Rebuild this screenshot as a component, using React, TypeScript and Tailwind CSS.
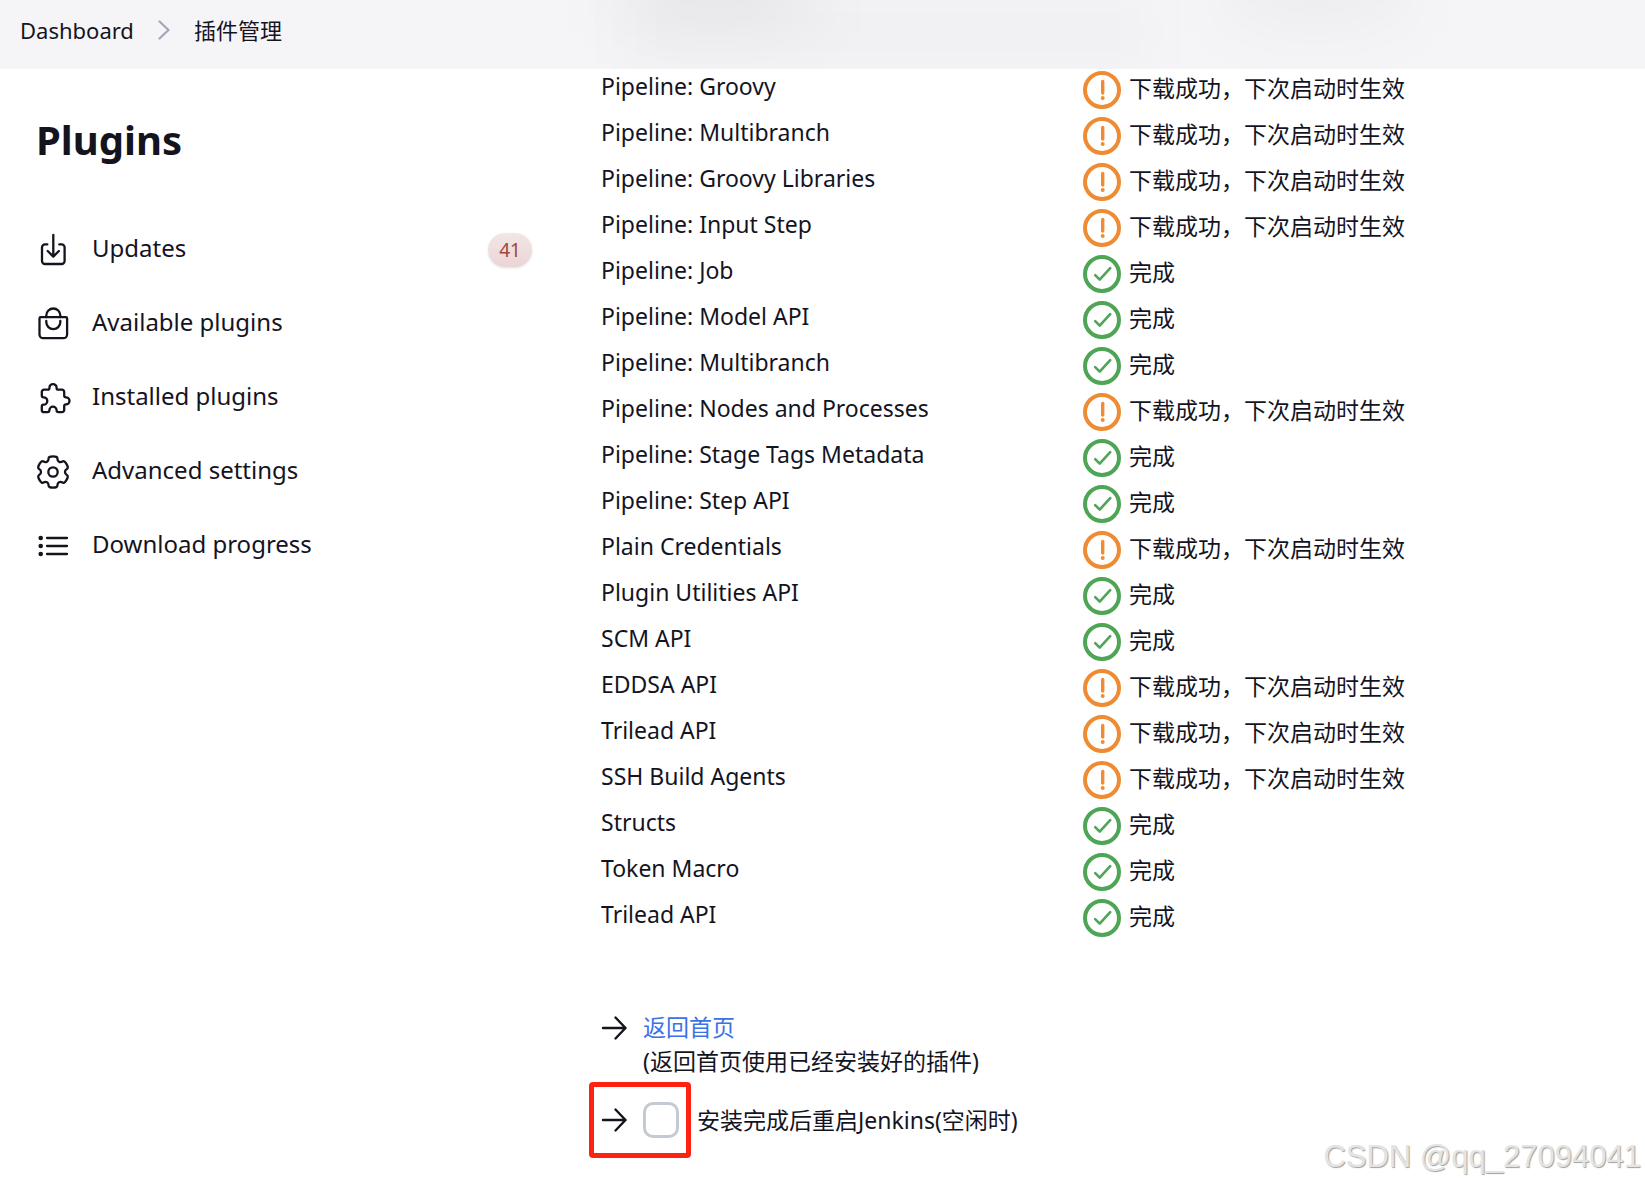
type Status = "done" | "pending"

const plugins: { name: string; status: Status }[] = [
  { name: "Pipeline: Groovy", status: "pending" },
  { name: "Pipeline: Multibranch", status: "pending" },
  { name: "Pipeline: Groovy Libraries", status: "pending" },
  { name: "Pipeline: Input Step", status: "pending" },
  { name: "Pipeline: Job", status: "done" },
  { name: "Pipeline: Model API", status: "done" },
  { name: "Pipeline: Multibranch", status: "done" },
  { name: "Pipeline: Nodes and Processes", status: "pending" },
  { name: "Pipeline: Stage Tags Metadata", status: "done" },
  { name: "Pipeline: Step API", status: "done" },
  { name: "Plain Credentials", status: "pending" },
  { name: "Plugin Utilities API", status: "done" },
  { name: "SCM API", status: "done" },
  { name: "EDDSA API", status: "pending" },
  { name: "Trilead API", status: "pending" },
  { name: "SSH Build Agents", status: "pending" },
  { name: "Structs", status: "done" },
  { name: "Token Macro", status: "done" },
  { name: "Trilead API", status: "done" },
]

const iconProps = {
  viewBox: "0 0 34 34",
  fill: "none",
  stroke: "currentColor",
  strokeWidth: 2.3,
  strokeLinecap: "round" as const,
  strokeLinejoin: "round" as const,
  className: "size-[34px] shrink-0 overflow-visible",
}

function UpdatesIcon() {
  return (
    <svg {...iconProps}>
      <path d="M11.3 11.4H9a3 3 0 00-3 3V28a3 3 0 003 3h16.6a3 3 0 003-3V14.4a3 3 0 00-3-3h-2.3" />
      <path d="M17.3 2v21.5M11.7 18l5.6 5.6 5.6-5.6" />
    </svg>
  )
}

function AvailableIcon() {
  return (
    <svg {...iconProps}>
      <path d="M4.7 10.2h25.2a1.2 1.2 0 011.2 1.2V27.5a3.7 3.7 0 01-3.7 3.7H7.2a3.7 3.7 0 01-3.7-3.7V11.4a1.2 1.2 0 011.2-1.2z" />
      <path d="M10.3 10.2V8.5a7 7 0 0114 0v1.7M10.3 14v1.2a7 7 0 0014 0V14" />
    </svg>
  )
}

function InstalledIcon() {
  return (
    <svg {...iconProps}>
      <path d="M8 8.7h3.6c1 0 1.8-.8 1.8-1.8v-.2a3.6 3.6 0 017.2 0v.2c0 1 .8 1.8 1.8 1.8H26a2.2 2.2 0 012.2 2.2v3.7c0 1 .8 1.8 1.8 1.8a3.5 3.5 0 010 7c-1 0-1.8.8-1.8 1.8v3.7a2.2 2.2 0 01-2.2 2.2h-3.6c-1 0-1.8-.8-1.8-1.8a3.6 3.6 0 00-7.2 0c0 1-.8 1.8-1.8 1.8H8a2.2 2.2 0 01-2.2-2.2v-3.2c0-1.2.8-2 1.8-2a3.7 3.7 0 000-7.4c-1 0-1.8-.8-1.8-1.8v-3.6A2.2 2.2 0 018 8.7z" />
    </svg>
  )
}

// Six rounded teeth, curve drawn through the midpoints of the corner points
function gearPath() {
  const corners: number[][] = []
  for (let i = 0; i < 6; i++) {
    for (const [angle, radius] of [[-16, 16.3], [16, 16.3], [21, 12.1], [39, 12.1]]) {
      const a = ((i * 60 + angle - 90) * Math.PI) / 180
      corners.push([17 + radius * Math.cos(a), 17 + radius * Math.sin(a)])
    }
  }
  const mid = (p: number[], q: number[]) => `${(p[0] + q[0]) / 2} ${(p[1] + q[1]) / 2}`
  const last = corners[corners.length - 1]
  return (
    `M${mid(last, corners[0])}` +
    corners.map((p, i) => `Q${p[0]} ${p[1]} ${mid(p, corners[(i + 1) % corners.length])}`).join("") +
    "z"
  )
}

function SettingsIcon() {
  return (
    <svg {...iconProps}>
      <path d={gearPath()} />
      <circle cx="17" cy="17" r="4.7" />
    </svg>
  )
}

function ProgressIcon() {
  return (
    <svg {...iconProps}>
      <path d="M11 9h20M11 17h20M11 25h20" />
      <g fill="currentColor" stroke="none">
        <circle cx="4.7" cy="9" r="2.3" />
        <circle cx="4.7" cy="17" r="2.3" />
        <circle cx="4.7" cy="25" r="2.3" />
      </g>
    </svg>
  )
}

function ArrowIcon() {
  return (
    <svg viewBox="0 0 26 26" fill="none" stroke="currentColor" strokeWidth="2.4" strokeLinecap="round" strokeLinejoin="round" className="size-[26px] shrink-0">
      <path d="M2 13h22.5M14.5 2.5L24.5 13l-10 10.500" />
    </svg>
  )
}

function StatusIcon({ status }: { status: Status }) {
  if (status === "done") {
    return (
      <svg viewBox="0 0 38 38" fill="none" stroke="#4ea556" strokeLinecap="round" strokeLinejoin="round" className="size-[38px] shrink-0">
        <circle cx="19" cy="19" r="17" strokeWidth="4" />
        <path d="M12.2 20.2l4.5 4.5 10.5-11.5" strokeWidth="2.6" />
      </svg>
    )
  }
  return (
    <svg viewBox="0 0 38 38" fill="none" stroke="#ef8b32" strokeLinecap="round" className="size-[38px] shrink-0">
      <circle cx="19" cy="19" r="17" strokeWidth="4" />
      <path d="M19.7 10.5v11.5" strokeWidth="3.4" />
      <circle cx="19.7" cy="27" r="2" fill="#ef8b32" stroke="none" />
    </svg>
  )
}

const menu = [
  { label: "Updates", icon: <UpdatesIcon />, badge: 41 },
  { label: "Available plugins", icon: <AvailableIcon /> },
  { label: "Installed plugins", icon: <InstalledIcon /> },
  { label: "Advanced settings", icon: <SettingsIcon /> },
  { label: "Download progress", icon: <ProgressIcon /> },
]

export default function App() {
  return (
    <div className="relative min-h-screen bg-white font-['Noto_Sans','Noto_Sans_CJK_SC',sans-serif] text-[23px] leading-[34px] text-[#14141f]">
      {/* Breadcrumbs */}
      <header className="relative h-[69px] overflow-hidden bg-[#f5f5f8] text-[22px]">
        {/* Content scrolled under the bar */}
        <div className="absolute -top-12 left-[38%] h-14 w-[11%] bg-black/8 blur-2xl" />
        <div className="absolute -top-12 left-[75%] h-14 w-[10%] bg-black/6 blur-2xl" />
        <div className="absolute top-0 left-[38%] h-16 w-[32%] bg-black/2 blur-xl" />
        <nav className="relative flex items-center px-5 pt-[13px]">
          <a href="#dashboard">Dashboard</a>
          <svg viewBox="0 0 12 20" fill="none" stroke="#a5a5b5" strokeWidth="2.2" strokeLinecap="round" strokeLinejoin="round" className="mx-6 h-5 w-3">
            <path d="M1.5 1.5L10.5 10l-9 8.5" />
          </svg>
          <a href="#plugins">插件管理</a>
        </nav>
      </header>

      <div className="flex">
        {/* Side menu */}
        <aside className="w-[35%] max-w-[568px] shrink-0 px-9 pt-[43px]">
          <h1 className="text-[40px] leading-[56px] font-bold">Plugins</h1>
          <ul className="mt-[45px]">
            {menu.map((item) => (
              <li key={item.label}>
                <a href="#menu" className="flex h-[74px] items-center">
                  {item.icon}
                  <span className="ml-[22px] pb-1 text-[24px]">{item.label}</span>
                  {item.badge && (
                    <span className="ml-auto rounded-full bg-linear-to-b from-[#f3e6e6] to-[#ebd5d5] px-[11px] text-[19px] text-[#a4443f] shadow-sm">
                      {item.badge}
                    </span>
                  )}
                </a>
              </li>
            ))}
          </ul>
        </aside>

        {/* Download list */}
        <main className="grow pl-[33px]">
          <table>
            <tbody>
              {plugins.map((plugin, i) => (
                <tr key={i} className="h-[46px]">
                  <td className="w-[482px] p-0 align-top">{plugin.name}</td>
                  <td className="p-0 align-top">
                    <div className="flex items-start gap-2 pt-[2px]">
                      <StatusIcon status={plugin.status} />
                      <span>{plugin.status === "done" ? "完成" : "下载成功，下次启动时生效"}</span>
                    </div>
                  </td>
                </tr>
              ))}
            </tbody>
          </table>

          <div className="mt-[67px] flex gap-4">
            <div className="flex h-9 items-center">
              <ArrowIcon />
            </div>
            <div>
              <a href="#home" className="block text-[#3b72e6]">返回首页</a>
              <p>(返回首页使用已经安装好的插件)</p>
            </div>
          </div>

          <div className="-ml-3 flex items-center pt-1">
            <div className="flex h-[76px] items-center gap-4 rounded-sm border-[5px] border-[#ff2213] px-[7px]">
              <ArrowIcon />
              <input
                id="restart"
                type="checkbox"
                className="size-9 appearance-none rounded-[10px] border-[3px] border-[#c3cad1] bg-white checked:bg-[#3b72e6]"
              />
            </div>
            <label htmlFor="restart" className="ml-[6px]">安装完成后重启Jenkins(空闲时)</label>
          </div>
        </main>
      </div>

      <div className="absolute right-1 bottom-[11px] font-['Liberation_Sans',sans-serif] text-[31px] text-[#e4e4e4] [text-shadow:1px_1px_1px_#a0a0a0]">
        CSDN @qq_27094041
      </div>
    </div>
  )
}
